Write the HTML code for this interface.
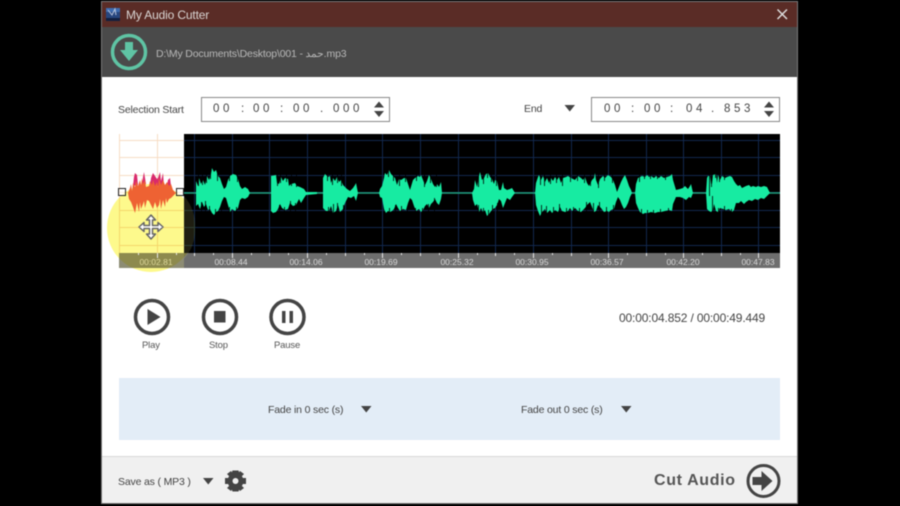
<!DOCTYPE html>
<html>
<head>
<meta charset="utf-8">
<style>
html,body{margin:0;padding:0;background:#000;width:900px;height:506px;overflow:hidden}
#w{position:absolute;left:0;top:0;width:900px;height:506px;filter:blur(.5px);overflow:hidden;background:#000}
.a{position:absolute;white-space:nowrap;font-family:"Liberation Sans",sans-serif}
.t{font-size:10.5px;color:#444;line-height:12px;letter-spacing:-.17px;transform:translate(0,-50%)}
.d{font-size:11.5px;color:#444;line-height:14px;letter-spacing:3.6px;top:102px}
.l{font-size:8.5px;color:#d8d8d8;line-height:10px;top:257px;width:50px;text-align:center}
svg{position:absolute;left:0;top:0}
</style>
</head>
<body>
<div id="w">
<div class="a" style="left:101px;top:1px;width:697px;height:503px;background:#777"></div>
<div class="a" style="left:102px;top:2px;width:695px;height:25px;background:#5a2c26"></div>
<div class="a" style="left:102px;top:27px;width:695px;height:50px;background:#4a4a4a"></div>
<div class="a" style="left:102px;top:77px;width:695px;height:380px;background:#fff"></div>
<div class="a" style="left:102px;top:456px;width:695px;height:1px;background:#d8d8d8"></div>
<div class="a" style="left:102px;top:457px;width:695px;height:46px;background:#f0f0f0"></div>
<div class="a" style="left:119px;top:378px;width:661px;height:62px;background:#e3edf7"></div>

<div class="a" style="left:126px;top:8px;font-size:12px;line-height:14px;letter-spacing:-.15px;color:#d9d5d3">My Audio Cutter</div>
<div class="a" style="left:156px;top:48px;font-size:10.5px;line-height:13px;letter-spacing:-.17px;color:#b8b8b8">D:\My Documents\Desktop\001 - حمد.mp3</div>
<div class="a t" style="left:118px;top:109.500px">Selection Start</div>
<div class="a t" style="left:524px;top:108.500px">End</div>

<div class="a" style="left:201px;top:97px;width:187px;height:23px;border:1px solid #888;background:#fff"></div>
<div class="a" style="left:591px;top:97px;width:187px;height:23px;border:1px solid #888;background:#fff"></div>
<div class="a d" style="left:213px">00</div><div class="a d" style="left:241px">:</div>
<div class="a d" style="left:253px">00</div><div class="a d" style="left:280px">:</div>
<div class="a d" style="left:293px">00</div><div class="a d" style="left:320px">.</div>
<div class="a d" style="left:333px">000</div>
<div class="a d" style="left:604px">00</div><div class="a d" style="left:631px">:</div>
<div class="a d" style="left:644px">00</div><div class="a d" style="left:670px">:</div>
<div class="a d" style="left:686px">04</div><div class="a d" style="left:711px">.</div>
<div class="a d" style="left:724px">853</div>

<div class="a" style="left:119px;top:134px;width:65px;height:119px;background:#fff"></div>
<div class="a" style="left:184px;top:134px;width:596px;height:119px;background:#000"></div>
<div class="a" style="left:119px;top:253px;width:661px;height:15px;background:#6e6e6e"></div>

<svg width="900" height="506" viewBox="0 0 900 506">
<g stroke="#f7dcc4" stroke-width="1" fill="none">
<path d="M119.500 134V253M157.500 134V253M119 140.500H184M119 157.500H184M119 175.500H184M119 192.500H184M119 210.500H184M119 227.500H184M119 245.500H184"/>
</g>
<g stroke="#12284e" stroke-width="1" fill="none">
<path d="M184 140.500H780M184 157.500H780M184 175.500H780M184 192.500H780M184 210.500H780M184 227.500H780M184 245.500H780"/>
<path d="M194.500 134V253M232.500 134V253M269.500 134V253M307.500 134V253M345.500 134V253M382.500 134V253M420.500 134V253M458.500 134V253M495.500 134V253M533.500 134V253M571.500 134V253M608.500 134V253M646.500 134V253M683.500 134V253M721.500 134V253M758.500 134V253"/>
</g>
<path d="M184 193H780" stroke="#1f9f7c" stroke-width="1.500"/>
<g fill="#17eba2">
<polygon points="196,193 196,181 198,186 199,178 201,184 203,180 205,185 207,176 209,180 211,174 212,168 214,172 216,170 218,176 220,178 222,184 224,189 226,187 228,180 230,176 233,174 236,175 238,179 240,186 242,189 245,187 248,189 250,193 248,197 245,199 242,198 240,200 238,208 235,211 232,209 230,212 228,205 226,198 224,197 222,201 220,207 218,211 216,212 214,215 212,213 210,209 208,210 206,204 204,207 202,202 200,209 198,204 196,206"/>
<polygon points="271,193 271,176 276,175 277,183 279,184 281,177 283,181 285,178 288,179 289,186 291,184 295,183 297,186 300,187 304,189 306,192 317,192 317,194 306,195 304,198 301,203 299,199 296,205 293,206 290,203 288,209 285,210 282,208 280,204 278,209 276,212 273,213 271,211"/>
<polygon points="323,193 323,178 325,174 328,177 330,176 331,183 333,178 335,181 337,177 339,182 341,180 343,185 345,187 347,189 350,191 353,188 355,185 356,183 358,193 356,201 354,196 351,198 348,197 345,203 343,209 340,212 338,205 336,211 333,213 331,206 329,211 326,211 323,208"/>
<polygon points="379,193 380,189 382,186 384,178 385,173 387,175 389,170 391,174 393,176 395,178 397,185 399,179 401,180 404,178 406,178 408,184 410,190 413,180 415,178 418,176 420,177 421,175 423,180 425,185 427,181 429,175 431,179 433,184 435,187 437,184 439,187 441,182 442,193 441,199 439,205 437,203 435,199 433,202 431,204 429,208 427,204 425,206 423,210 421,212 419,209 416,211 414,206 412,200 410,198 408,203 406,210 403,209 400,211 398,208 396,204 394,209 392,211 390,212 388,211 386,213 384,209 382,198 380,197"/>
<polygon points="472,193 474,189 475,180 477,187 479,176 480,172 482,180 484,178 486,174 488,173 490,177 492,179 494,184 495,180 497,181 499,190 501,190 503,182 504,188 507,190 510,189 512,188 515,193 512,197 510,200 507,198 505,203 503,208 501,201 499,199 497,205 495,208 493,209 491,211 489,214 487,216 485,210 483,212 481,208 479,212 477,204 475,206 473,200"/>
<polygon points="535,193 536,183 538,177 539,175 541,180 543,176 545,182 547,178 549,183 551,178 553,181 555,177 557,180 559,177 561,183 563,178 566,177 568,176 571,178 573,179 575,180 578,176 581,178 583,180 585,177 587,183 589,186 592,180 594,178 595,173 596,180 598,185 600,179 603,176 605,178 608,175 611,177 613,180 615,185 617,192 619,187 621,182 623,178 625,175 627,180 629,186 631,190 632,193 630,197 628,203 626,207 624,209 622,205 620,200 618,197 616,202 614,209 611,210 609,212 607,211 604,212 601,208 598,205 596,211 594,212 592,207 590,202 587,205 585,208 583,210 581,212 578,211 575,208 572,211 570,208 568,211 565,212 562,211 560,207 558,212 555,210 552,213 550,210 547,213 545,209 542,212 540,216 538,211 536,205"/>
<polygon points="635,193 636,184 638,178 640,177 642,176 645,177 647,175 649,177 651,176 654,178 656,176 659,178 661,176 664,178 667,177 670,176 672,174 673,180 676,190 680,189 683,188 685,186 688,189 690,186 691,184 693,193 691,198 689,197 686,200 683,198 680,197 676,197 673,204 672,211 669,210 665,211 661,212 658,212 655,213 651,212 648,213 645,213 643,214 640,212 638,208 636,203"/>
<polygon points="706,193 707,178 708,176 710,176 711,184 712,184 713,175 716,174 717,183 718,175 720,180 722,176 725,178 727,177 730,176 732,177 734,181 736,184 738,186 740,185 742,188 744,187 746,186 749,185 751,187 753,186 756,187 758,186 761,187 764,186 767,187 770,193 767,196 764,199 761,198 758,200 755,199 752,201 749,200 746,202 744,204 741,201 739,203 736,203 734,210 732,212 729,209 726,210 723,209 720,208 718,212 716,211 714,204 713,210 711,212 709,211 707,209"/>
</g>
<!-- notches that break the envelope into spikes -->
<path d="M198.500 170V186M202.500 170V185M206.500 170V183M210.500 165V179M217.500 165V181M229.500 170V181M237.500 170V182M201.500 216V202M205.500 216V201M209.500 218V206M215.500 218V209M221.500 218V204M229.500 216V207M236.500 216V207
M277.500 170V186M280.500 170V183M286.500 170V182M291.500 170V186M296.500 175V187M279.500 216V205M284.500 216V207M290.500 216V201M295.500 216V203
M327.500 170V181M332.500 170V185M337.500 170V183M341.500 170V186M328.500 216V207M333.500 216V204M337.500 216V203M343.500 216V205
M388.500 165V177M393.500 170V181M399.500 170V186M405.500 170V182M416.500 170V181M424.500 170V187M430.500 170V183M436.500 170V187M389.500 216V208M395.500 216V205M401.500 216V206M407.500 216V206M415.500 216V208M422.500 216V208M428.500 216V204M434.500 216V198
M478.500 170V187M483.500 170V184M487.500 170V178M491.500 170V182M496.500 170V186M478.500 220V205M483.500 220V208M488.500 220V210M492.500 220V205M497.500 220V203
M540.500 170V185M544.500 170V186M550.500 170V184M556.500 170V183M562.500 170V186M570.500 170V182M577.500 170V181M584.500 170V183M590.500 170V186M598.500 170V188M604.500 170V181M612.500 170V183M541.500 220V205M546.500 220V206M553.500 220V207M559.500 220V204M566.500 220V208M573.500 220V207M579.500 220V208M586.500 220V202M593.500 220V203M599.500 220V202M606.500 220V207M613.500 220V205
M639.500 170V182M644.500 170V179M650.500 170V179M657.500 170V179M665.500 170V180M641.500 220V209M647.500 220V210M653.500 220V210M660.500 220V209M668.500 220V208
M709.500 170V196M711.500 170V187M715.500 170V178M719.500 170V182M724.500 170V180M712.500 220V196M718.500 220V208M724.500 220V206M731.500 220V209" stroke="#000" stroke-width="1" stroke-opacity=".8" fill="none"/>
<!-- yellow highlight -->
<circle cx="151" cy="228" r="44" fill="#fdf98c" style="mix-blend-mode:multiply"/>
<path d="M184 196A44 44 0 0 1 195 228A44 44 0 0 1 184 259Z" fill="#fdf98c" opacity=".12"/>
<path d="M119 253H184V268H119Z" fill="#fdf98c" opacity=".22"/>
<!-- orange wave -->
<path d="M133 186l1-9 1-4 2 2 1 10zM142 186l1-9 1-5 2 12zM150 186l1-8 2-5 2 3 2 3 1-1 2-6 1 9 1-4 1-4 1 13zM167 186l1-6 2-2 1 8z" fill="#d92a6c"/>
<polygon points="128,193 130,188 131,184 132,191 133,183 135,187 136,181 138,186 140,180 141,185 142,178 143,184 145,180 146,187 149,186 150,181 152,185 153,180 155,186 157,182 158,187 159,178 161,185 163,180 165,185 167,182 169,186 171,184 173,190 176,193 173,196 171,198 169,199 167,203 166,198 165,207 163,200 161,209 160,199 159,205 157,208 155,202 153,209 151,205 149,201 147,200 145,208 144,201 143,204 141,209 140,202 139,212 137,203 135,213 133,207 131,202 129,199" fill="#ee6233"/>
<rect x="118.500" y="188.500" width="7" height="7" fill="#fff" fill-opacity=".5" stroke="#222"/>
<rect x="176.500" y="188.500" width="7" height="7" fill="#fff" fill-opacity=".5" stroke="#222"/>
<path d="M151 215l4.500 5h-3v5.500h5.500v-3l5 4.500-5 4.500v-3h-5.500v5.500h3l-4.500 5-4.500-5h3v-5.500h-5.500v3l-5-4.500 5-4.500v3h5.500v-5.500h-3z" fill="#fff" stroke="#666" stroke-width="1.500" stroke-linejoin="round"/>
<path d="M157.500 253v5M194.500 253v3M213.500 253v2M232.500 253v5M251.500 253v2M269.500 253v3M288.500 253v2M307.500 253v5M326.500 253v2M345.500 253v3M364.500 253v2M382.500 253v5M401.500 253v2M420.500 253v3M439.500 253v2M458.500 253v5M477.500 253v2M495.500 253v3M514.500 253v2M533.500 253v5M552.500 253v2M571.500 253v3M590.500 253v2M608.500 253v5M627.500 253v2M646.500 253v3M665.500 253v2M683.500 253v5M702.500 253v2M721.500 253v3M740.500 253v2M758.500 253v5M138.500 253v2M176.500 253v2" stroke="#e8e8e8" stroke-width="1"/>
<rect x="106" y="8" width="14" height="13" fill="#27467e"/>
<path d="M106 8h14v4h-14z" fill="#3e6cb0"/>
<path d="M108 10l4 5 3-6 1 6" stroke="#b8c4dc" stroke-width="1" fill="none"/>
<path d="M106 18h14v3h-14z" fill="#121f3f"/>
<path d="M777.500 9.500l9.500 9.500M787 9.500l-9.500 9.500" stroke="#ddd" stroke-width="1.500" fill="none"/>
<circle cx="129" cy="52" r="16.500" fill="none" stroke="#5fc4a4" stroke-width="3.500"/>
<path d="M125 42h8v8h5l-9 11-9-11h5z" fill="#5fc4a4"/>
<g fill="#444">
<path d="M379 101.500l5 6h-10zM379 117l5-6h-10z"/>
<path d="M769 101.500l5 6h-10zM769 117l5-6h-10z"/>
<path d="M564.500 105h10.500l-5.250 6.500z"/>
<path d="M361 406h10.500l-5.250 6.500z"/>
<path d="M621 406h10.500l-5.250 6.500z"/>
<path d="M203 478h10.500l-5.250 6.500z"/>
</g>
<g fill="none" stroke="#444" stroke-width="3.500">
<circle cx="152" cy="317" r="16.500"/>
<circle cx="220" cy="317" r="16.500"/>
<circle cx="287.500" cy="317" r="16.500"/>
</g>
<g fill="#444">
<path d="M147.500 309l13 8-13 8z"/>
<rect x="214" y="311" width="11.500" height="11.500"/>
<rect x="282" y="311" width="3.500" height="12"/>
<rect x="289.500" y="311" width="3.500" height="12"/>
</g>
<g fill="#444">
<circle cx="235.500" cy="481" r="8"/>
<path d="M232.500 470.500h6l1 3h-8zM232.500 491.500h6l1-3h-8zM225 478h3v6h-3zM243 478h3v6h-3z"/>
<path d="M227 474l4-3 2 3-3 3zM244 474l-4-3-2 3 3 3zM227 488l4 3 2-3-3-3zM244 488l-4 3-2-3 3-3z"/>
</g>
<circle cx="235.500" cy="481" r="3" fill="#f0f0f0"/>
<circle cx="763.500" cy="481" r="15.500" fill="none" stroke="#444" stroke-width="3"/>
<path d="M752.500 477h9v-6l11 10-11 10v-6h-9z" fill="#444"/>
</svg>

<div class="a l" style="left:131px;color:#ddd89a">00:02.81</div>
<div class="a l" style="left:206px">00:08.44</div>
<div class="a l" style="left:281px">00:14.06</div>
<div class="a l" style="left:356px">00:19.69</div>
<div class="a l" style="left:432px">00:25.32</div>
<div class="a l" style="left:507px">00:30.95</div>
<div class="a l" style="left:582px">00:36.57</div>
<div class="a l" style="left:658px">00:42.20</div>
<div class="a l" style="left:733px">00:47.83</div>

<div class="a t" style="left:142px;top:345.500px;font-size:9.500px;color:#555">Play</div>
<div class="a t" style="left:209px;top:345.500px;font-size:9.500px;color:#555">Stop</div>
<div class="a t" style="left:274px;top:345.500px;font-size:9.500px;color:#555">Pause</div>
<div class="a t" style="left:619px;top:318px;font-size:12px;line-height:14px;letter-spacing:-.15px">00:00:04.852 / 00:00:49.449</div>
<div class="a t" style="left:268px;top:410px">Fade in 0 sec (s)</div>
<div class="a t" style="left:521px;top:410px">Fade out 0 sec (s)</div>
<div class="a t" style="left:118px;top:481.500px">Save as ( MP3 )</div>
<div class="a t" style="left:654px;top:481px;font-size:16px;line-height:18px;font-weight:bold;color:#555;letter-spacing:.65px">Cut Audio</div>
</div>
</body>
</html>
